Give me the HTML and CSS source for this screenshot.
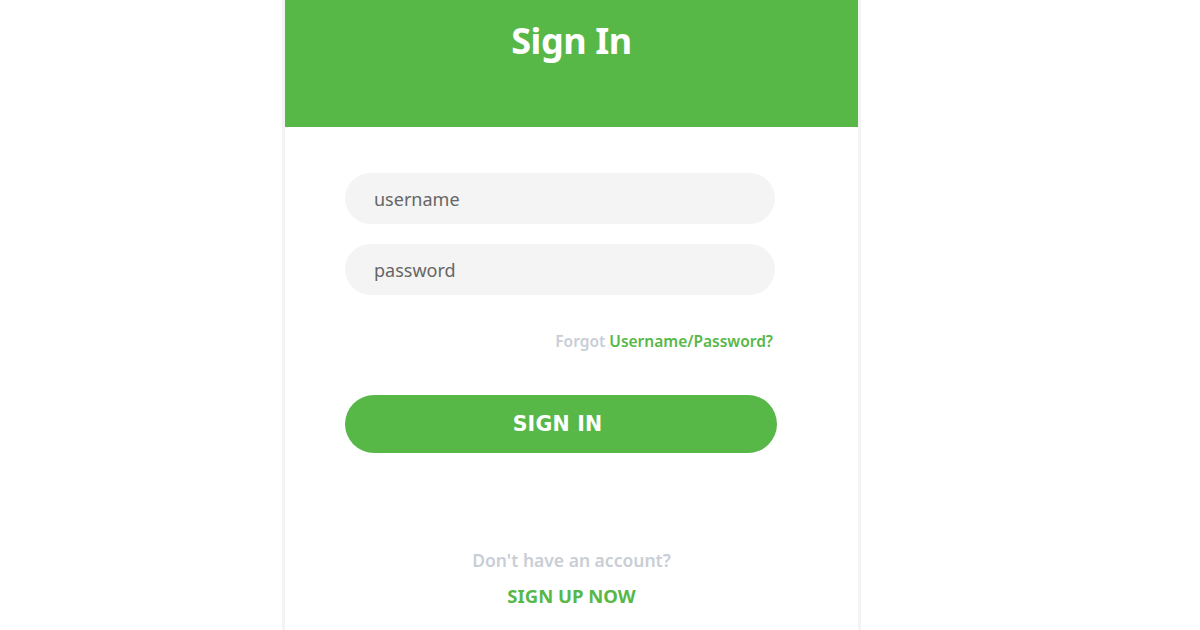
FILE: index.html
```html
<!DOCTYPE html>
<html lang="en">
<head>
<meta charset="utf-8">
<title>Sign In</title>
<link rel="stylesheet" href="styles.css">
</head>
<body>
<main class="card">
  <header class="card-header">
    <h1 class="title">Sign In</h1>
  </header>
  <form class="form">
    <input class="field" type="text" placeholder="username">
    <input class="field" type="password" placeholder="password">
    <p class="forgot">Forgot <a href="#" class="link">Username/Password?</a></p>
    <button class="btn" type="button">SIGN IN</button>
  </form>
  <footer class="signup">
    <p class="signup-text">Don't have an account?</p>
    <a href="#" class="signup-link">SIGN UP NOW</a>
  </footer>
</main>
</body>
</html>
```

FILE: styles.css
```css
html, body {
  margin: 0;
  padding: 0;
  background: #ffffff;
  height: 630px;
  overflow: hidden;
}

body {
  font-family: "Noto Sans", "Open Sans", sans-serif;
}

.card {
  width: 573px;
  margin-left: 282px;
  border-left: 3px solid #f3f3f3;
  border-right: 3px solid #f3f3f3;
  height: 630px;
  display: flex;
  flex-direction: column;
}

.card-header {
  background: #57b848;
  height: 127px;
  display: flex;
  justify-content: center;
}

.title {
  margin: 16px 0 0;
  color: #ffffff;
  font-family: "Noto Sans", sans-serif;
  font-weight: 700;
  font-size: 36px;
  line-height: 50px;
  letter-spacing: -0.4px;
}

.form {
  padding: 46px 81px 0 60px;
  display: flex;
  flex-direction: column;
}

.field {
  height: 51px;
  border: none;
  border-radius: 26px;
  background: #f4f4f4;
  padding: 0 29px;
  font-family: "Noto Sans", sans-serif;
  font-size: 18px;
  color: #666666;
  margin: 0 2px 20px 0;
  outline: none;
}

.field::placeholder {
  color: #666666;
  opacity: 1;
}

.forgot {
  margin: 15px 4px 0 0;
  text-align: right;
  font-size: 15.5px;
  font-weight: 600;
  color: #c9ced6;
  line-height: 22px;
}

.link {
  color: #57b848;
  text-decoration: none;
}

.btn {
  margin-top: 43px;
  height: 58px;
  border: none;
  border-radius: 29px;
  background: #57b848;
  color: #ffffff;
  font-family: "DejaVu Sans", Verdana, sans-serif;
  font-weight: 700;
  font-size: 20.5px;
  letter-spacing: 0.2px;
  padding: 0 7px 0 0;
  cursor: pointer;
}

.signup {
  margin-top: 94px;
  display: flex;
  flex-direction: column;
  align-items: center;
}

.signup-text {
  margin: 0;
  font-size: 17.5px;
  font-weight: 600;
  color: #c9ced6;
  line-height: 26px;
}

.signup-link {
  margin-top: 10px;
  font-size: 18.5px;
  font-weight: 700;
  color: #57b848;
  text-decoration: none;
  line-height: 26px;
}
```
